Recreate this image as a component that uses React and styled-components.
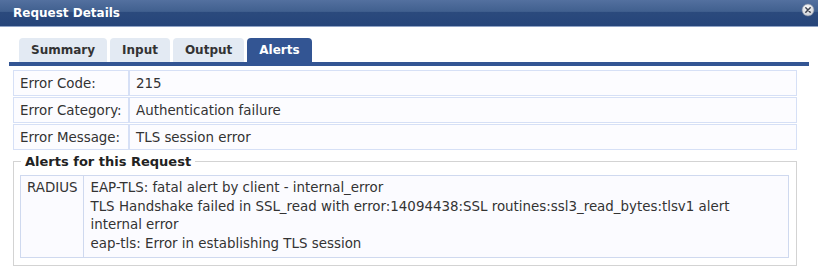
import React from 'react';
import styled, { createGlobalStyle } from 'styled-components';

const GlobalStyle = createGlobalStyle`
  html, body {
    margin: 0;
    padding: 0;
    background: #ffffff;
  }
  body {
    font-family: "DejaVu Sans", Verdana, sans-serif;
    font-size: 13.4px;
    color: #333333;
  }
`;

const Window = styled.div`
  width: 818px;
  height: 280px;
  background: #ffffff;
  overflow: hidden;
`;

const TitleBar = styled.div`
  display: flex;
  align-items: center;
  justify-content: space-between;
  height: 26px;
  padding: 0 13px;
  background: linear-gradient(#53709f 0, #41608f 44%, #2b4a7d 46%, #26457a 100%);
  border-bottom: 1px solid #8fa3c6;
`;

const Title = styled.span`
  font-weight: bold;
  font-size: 12px;
  color: #ffffff;
  margin-top: -1px;
`;

const CloseButton = styled.span`
  display: flex;
  align-self: flex-start;
  margin-top: 3px;
  margin-right: -10px;
`;

const Content = styled.div`
  padding: 11px 9px 0 9px;
`;

const TabList = styled.div`
  display: flex;
  gap: 3px;
  padding-left: 10px;
  border-bottom: 4px solid #335593;
`;

const Tab = styled.div`
  height: 24px;
  line-height: 24px;
  padding: 0 12px;
  font-weight: bold;
  font-size: 12px;
  border-radius: 4px 4px 0 0;
  background: ${(p) => (p.active ? '#335593' : '#e3eaf3')};
  color: ${(p) => (p.active ? '#ffffff' : '#333333')};
`;

const Panel = styled.div`
  padding: 3px 12px 0 4px;
`;

const DetailTable = styled.table`
  width: 100%;
  border-collapse: separate;
  border-spacing: 0 1px;
`;

const Cell = styled.td`
  height: 24px;
  padding: 0 6px;
  background: #fcfcff;
  border: 1px solid #d6e0f6;
  vertical-align: middle;
  white-space: ${(p) => (p.label ? 'nowrap' : 'normal')};
  width: ${(p) => (p.label ? '102px' : 'auto')};
`;

const Fieldset = styled.fieldset`
  margin: 3px 0 0 0;
  padding: 6px 7px 7px 6px;
  border: 1px solid #d3d3d3;
`;

const Legend = styled.legend`
  font-weight: bold;
  font-size: 13px;
  color: #222222;
  padding: 0 4px;
  margin-left: 1px;
`;

const AlertTable = styled.table`
  width: 100%;
  border-collapse: collapse;
  background: #fbfbff;
  border: 1px solid #cfd9ef;
`;

const AlertSource = styled.td`
  width: 50px;
  padding: 3px 6px;
  vertical-align: top;
  line-height: 18.7px;
  border-right: 1px solid #cfd9ef;
`;

const AlertText = styled.td`
  padding: 3px 6px;
  line-height: 18.7px;
  vertical-align: top;
`;

const CloseIcon = () => (
  <svg width="14" height="14" viewBox="0 0 14 14">
    <defs>
      <radialGradient id="cg" cx="45%" cy="35%" r="70%">
        <stop offset="0%" stopColor="#ffffff" />
        <stop offset="100%" stopColor="#c4c8cf" />
      </radialGradient>
    </defs>
    <circle cx="7" cy="7" r="6" fill="url(#cg)" stroke="#7e8aa0" strokeWidth="0.6" />
    <path d="M4.8 4.8 L9.2 9.2 M9.2 4.8 L4.8 9.2" stroke="#3d4350" strokeWidth="1.5" strokeLinecap="round" />
  </svg>
);

const tabs = ['Summary', 'Input', 'Output', 'Alerts'];

const details = [
  ['Error Code:', '215'],
  ['Error Category:', 'Authentication failure'],
  ['Error Message:', 'TLS session error'],
];

const alertLines = [
  'EAP-TLS: fatal alert by client - internal_error',
  'TLS Handshake failed in SSL_read with error:14094438:SSL routines:ssl3_read_bytes:tlsv1 alert internal error',
  'eap-tls: Error in establishing TLS session',
];

const App = () => (
  <Window>
    <GlobalStyle />
    <TitleBar>
      <Title>Request Details</Title>
      <CloseButton>
        <CloseIcon />
      </CloseButton>
    </TitleBar>
    <Content>
      <TabList>
        {tabs.map((t) => (
          <Tab key={t} active={t === 'Alerts'}>{t}</Tab>
        ))}
      </TabList>
      <Panel>
        <DetailTable>
          <tbody>
            {details.map(([label, value]) => (
              <tr key={label}>
                <Cell label>{label}</Cell>
                <Cell>{value}</Cell>
              </tr>
            ))}
          </tbody>
        </DetailTable>
        <Fieldset>
          <Legend>Alerts for this Request</Legend>
          <AlertTable>
            <tbody>
              <tr>
                <AlertSource>RADIUS</AlertSource>
                <AlertText>
                  {alertLines.map((line) => (
                    <div key={line}>{line}</div>
                  ))}
                </AlertText>
              </tr>
            </tbody>
          </AlertTable>
        </Fieldset>
      </Panel>
    </Content>
  </Window>
);

export default App;
